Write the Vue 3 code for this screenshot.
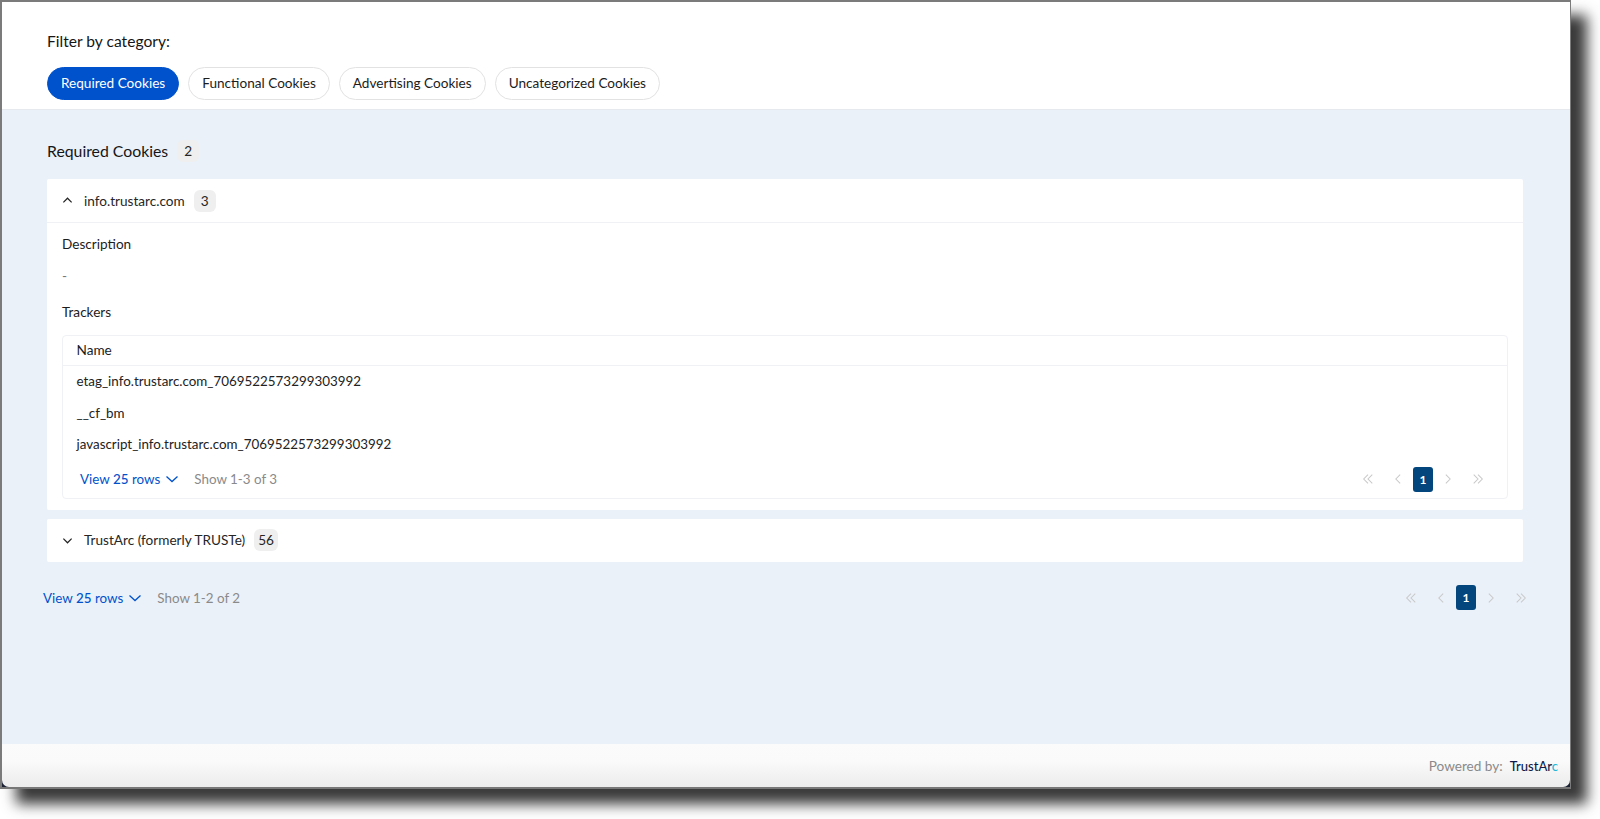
<script setup>
const filters = [
  { label: "Required Cookies", active: true },
  { label: "Functional Cookies", active: false },
  { label: "Advertising Cookies", active: false },
  { label: "Uncategorized Cookies", active: false },
];

const trackers = [
  "etag_info.trustarc.com_7069522573299303992",
  "__cf_bm",
  "javascript_info.trustarc.com_7069522573299303992",
];

const pagers = [
  { id: "inner", text: "Show 1-3 of 3" },
  { id: "outer", text: "Show 1-2 of 2" },
];
</script>

<template>
  <div class="page">
    <div class="window">
      <header class="filters">
        <div class="filters-label">Filter by category:</div>
        <div class="pills">
          <button
            v-for="f in filters"
            :key="f.label"
            class="pill"
            :class="{ active: f.active }"
          >
            {{ f.label }}
          </button>
        </div>
      </header>

      <main class="content">
        <div class="section-title">
          <span>Required Cookies</span>
          <span class="count">2</span>
        </div>

        <section class="card">
          <div class="card-head open">
            <svg class="toggle" viewBox="0 0 12 12"><polyline points="1.5,8 6,3.5 10.5,8" /></svg>
            <span>info.trustarc.com</span>
            <span class="count">3</span>
          </div>
          <div class="card-body">
            <div class="label">Description</div>
            <div class="dash">-</div>
            <div class="label trackers-label">Trackers</div>
            <div class="table">
              <div class="table-head">Name</div>
              <div v-for="t in trackers" :key="t" class="table-row">{{ t }}</div>
              <div class="pager inner">
                <div class="pager-left">
                  <span class="view">View <b>25</b> rows</span>
                  <svg class="view-caret" viewBox="0 0 12 12"><polyline points="0.5,3.5 6,8.5 11.5,3.5" /></svg>
                  <span class="show">{{ pagers[0].text }}</span>
                </div>
                <div class="pages">
                  <svg class="nav" viewBox="0 0 14 14"><polyline points="7,2 2,7 7,12" /><polyline points="12,2 7,7 12,12" /></svg>
                  <svg class="nav" viewBox="0 0 14 14"><polyline points="9.5,2 4.5,7 9.5,12" /></svg>
                  <span class="page-btn">1</span>
                  <svg class="nav" viewBox="0 0 14 14"><polyline points="4.5,2 9.5,7 4.5,12" /></svg>
                  <svg class="nav" viewBox="0 0 14 14"><polyline points="2,2 7,7 2,12" /><polyline points="7,2 12,7 7,12" /></svg>
                </div>
              </div>
            </div>
          </div>
        </section>

        <section class="card">
          <div class="card-head">
            <svg class="toggle" viewBox="0 0 12 12"><polyline points="1.5,4 6,8.5 10.5,4" /></svg>
            <span>TrustArc (formerly TRUSTe)</span>
            <span class="count">56</span>
          </div>
        </section>

        <div class="pager outer">
          <div class="pager-left">
            <span class="view">View <b>25</b> rows</span>
            <svg class="view-caret" viewBox="0 0 12 12"><polyline points="0.5,3.5 6,8.5 11.5,3.5" /></svg>
            <span class="show">{{ pagers[1].text }}</span>
          </div>
          <div class="pages">
            <svg class="nav" viewBox="0 0 14 14"><polyline points="7,2 2,7 7,12" /><polyline points="12,2 7,7 12,12" /></svg>
            <svg class="nav" viewBox="0 0 14 14"><polyline points="9.5,2 4.5,7 9.5,12" /></svg>
            <span class="page-btn">1</span>
            <svg class="nav" viewBox="0 0 14 14"><polyline points="4.5,2 9.5,7 4.5,12" /></svg>
            <svg class="nav" viewBox="0 0 14 14"><polyline points="2,2 7,7 2,12" /><polyline points="7,2 12,7 7,12" /></svg>
          </div>
        </div>
      </main>

      <footer class="footer">
        <span class="powered">Powered by:</span>
        <span class="logo">TrustAr<i>c</i></span>
      </footer>
    </div>
  </div>
</template>

<style>
html,
body {
  margin: 0;
  background: #fff;
  overflow: hidden;
}
</style>

<style scoped>
.page {
  height: 819px;
  width: 1600px;
  box-sizing: border-box;
  padding: 0 29px 30px 0;
  font-family: "Lato", "Open Sans", sans-serif;
  font-size: 13.6px;
  color: #1c1c1c;
}

.window {
  height: 100%;
  box-sizing: border-box;
  display: flex;
  flex-direction: column;
  /* only shows through the rounded footer corners */
  background: #1c2233;
  border: 2px solid #7b7b7b;
  border-right-width: 1px;
  border-bottom-color: #777;
  box-shadow: 16px 15px 13px #3a3a3a;
}

.filters {
  height: 108px;
  flex-shrink: 0;
  box-sizing: border-box;
  padding: 29px 45px 0;
  background: #fff;
  border-bottom: 1px solid #e6e9ee;
}

.filters-label {
  font-size: 15.6px;
  line-height: 20px;
  color: #161616;
}

.pills {
  display: flex;
  gap: 9px;
  margin-top: 16px;
}

.pill {
  height: 33px;
  padding: 0 13px 2px;
  font: inherit;
  font-size: 13.6px;
  color: #1c1c1c;
  background: #fff;
  border: 1px solid #e2e2e2;
  border-radius: 17px;
}

.pill.active {
  background: #0052cc;
  border-color: #0052cc;
  color: #fff;
}

.content {
  flex: 1;
  box-sizing: border-box;
  background: #eaf1f9;
  padding: 29px 47px 0 45px;
}

.section-title {
  display: flex;
  align-items: center;
  gap: 9px;
  height: 24px;
  line-height: 22px;
  margin-bottom: 16px;
  font-size: 15.8px;
  color: #161616;
}

.section-title > span:first-child {
  padding-bottom: 1px;
}

.count {
  display: inline-flex;
  align-items: center;
  justify-content: center;
  min-width: 22px;
  height: 22px;
  box-sizing: border-box;
  padding: 0 4px;
  background: #efefef;
  border-radius: 6px;
  font-size: 13.6px;
  color: #262626;
}

.card {
  background: #fff;
  border-radius: 2px;
  margin-bottom: 9px;
}

.card-head {
  display: flex;
  align-items: center;
  height: 43px;
  padding: 0 15px;
  color: #262626;
}

.card-head.open {
  border-bottom: 1px solid #eff1f4;
}

.card-head .count {
  margin-left: 9px;
}

.toggle {
  width: 11px;
  height: 11px;
  margin-right: 11px;
  fill: none;
  stroke: #222;
  stroke-width: 1.3;
}

.card-body {
  padding: 12px 15px 11px;
}

.label {
  line-height: 18px;
  color: #1c1c1c;
}

.dash {
  margin-top: 14px;
  line-height: 18px;
  color: #777;
}

.trackers-label {
  margin-top: 18px;
}

.table {
  margin-top: 14px;
  border: 1px solid #eff1f4;
  border-radius: 4px;
}

.table-head {
  height: 29px;
  line-height: 29px;
  padding: 0 14px 0 13.5px;
  border-bottom: 1px solid #eff1f4;
}

.table-row {
  height: 31.5px;
  line-height: 30px;
  padding: 0 13.5px;
  font-size: 13.4px;
  color: #222;
}

.pager {
  display: flex;
  align-items: center;
  justify-content: space-between;
  font-size: 13.4px;
}

.pager.inner {
  height: 37px;
  padding: 0 14px 0 17px;
}

.pager.outer {
  height: 26px;
  margin: 23px -13px 0 -4px;
}

.pager-left {
  display: flex;
  align-items: center;
}

.view {
  color: #0052cc;
}

.view b {
  font-weight: 500;
}

.view-caret {
  width: 12px;
  height: 12px;
  margin-left: 6px;
  fill: none;
  stroke: #0052cc;
  stroke-width: 1.3;
}

.show {
  margin-left: 16px;
  color: #8a8a8a;
}

.pages {
  display: flex;
  align-items: center;
}

.nav {
  width: 12px;
  height: 12px;
  padding: 0 9px;
  fill: none;
  stroke: #c9c9c9;
  stroke-width: 1.2;
}

.page-btn {
  display: flex;
  align-items: center;
  justify-content: center;
  width: 20px;
  height: 25px;
  background: #03467d;
  border-radius: 3px;
  color: #fff;
  font-weight: 700;
  font-size: 12px;
}

.footer {
  height: 43px;
  flex-shrink: 0;
  box-sizing: border-box;
  display: flex;
  align-items: center;
  justify-content: flex-end;
  padding: 0 12px 0 0;
  background: linear-gradient(#fbfbfb, #fafafa 40%, #ececec);
  border-radius: 0 0 7px 7px;
}

.powered {
  color: #8a8a8a;
}

.logo {
  margin-left: 7px;
  font-size: 13px;
  font-weight: 500;
  color: #0d1d4a;
}

.logo i {
  font-style: normal;
  color: #1eb8d8;
}
</style>
